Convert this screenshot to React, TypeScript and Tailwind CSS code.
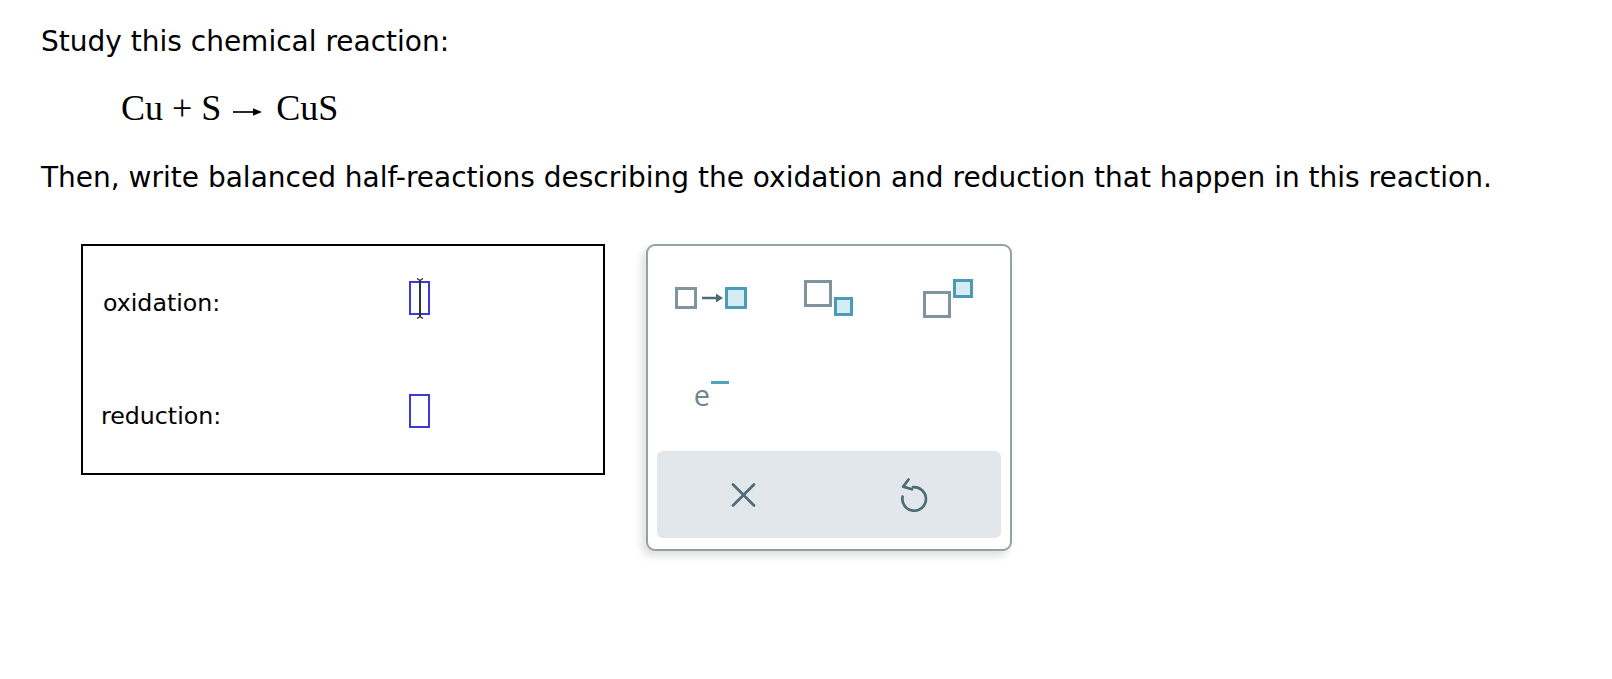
import React from "react";

function IconArrowBoxes() {
  return (
    <svg width="72" height="22" viewBox="0 0 72 22">
      <rect x="1.5" y="1.5" width="19" height="19" fill="#fff" stroke="#7f949c" strokeWidth="3" />
      <line x1="27" y1="11" x2="43" y2="11" stroke="#4f6b75" strokeWidth="2.5" />
      <polygon points="41,6.5 48,11 41,15.5" fill="#4f6b75" />
      <rect x="51.5" y="1.5" width="19" height="19" fill="#d6ecf4" stroke="#4a9bb6" strokeWidth="3" />
    </svg>
  );
}

function IconSubscript() {
  return (
    <svg width="49" height="36" viewBox="0 0 49 36">
      <rect x="1.5" y="1.5" width="25" height="24" fill="#fff" stroke="#7f949c" strokeWidth="3" />
      <rect x="31.5" y="18.5" width="16" height="16" fill="#d6ecf4" stroke="#4a9bb6" strokeWidth="3" />
    </svg>
  );
}

function IconSuperscript() {
  return (
    <svg width="50" height="39" viewBox="0 0 50 39">
      <rect x="1.5" y="13.5" width="25" height="24" fill="#fff" stroke="#7f949c" strokeWidth="3" />
      <rect x="31.5" y="1.5" width="17" height="16" fill="#d6ecf4" stroke="#4a9bb6" strokeWidth="3" />
    </svg>
  );
}

function IconX() {
  return (
    <svg width="25" height="24" viewBox="0 0 25 24">
      <path d="M2 1.5 L23 22.5 M23 1.5 L2 22.5" stroke="#4e6c76" strokeWidth="2.7" strokeLinecap="round" />
    </svg>
  );
}

function IconUndo() {
  return (
    <svg width="28" height="34" viewBox="0 0 28 34" fill="none">
      <path d="M12 9.2 A11.8 11.8 0 1 1 1.6 18.5" stroke="#4e6c76" strokeWidth="2.7" strokeLinecap="round" />
      <path d="M7.5 1.5 L2.2 8.6 L11 11.3" stroke="#4e6c76" strokeWidth="2.7" strokeLinecap="round" strokeLinejoin="round" />
    </svg>
  );
}

function ReactionArrow() {
  return (
    <svg width="29" height="40" viewBox="0 0 29 40">
      <line x1="0" y1="24" x2="22" y2="24" stroke="#000" strokeWidth="1.7" />
      <polygon points="20,20.3 29,24 20,27.7" fill="#000" />
    </svg>
  );
}

function Cursor() {
  return (
    <svg className="absolute left-[5px] top-[-5px]" width="8" height="41" viewBox="0 0 8 41">
      <line x1="4" y1="2" x2="4" y2="39" stroke="#333" strokeWidth="2" />
      <path d="M1 0.5 L4 2.5 L7 0.5 M1 40.5 L4 38.5 L7 40.5" stroke="#333" strokeWidth="1.4" fill="none" />
    </svg>
  );
}

export default function App() {
  return (
    <div className="min-h-[679px] w-full bg-white text-black pl-[41px] pt-[25px] font-['DejaVu_Sans',Verdana,sans-serif]">
      <div className="text-[28px] leading-[34px]">Study this chemical reaction:</div>

      <div className="mt-[29px] ml-[80px] h-[40px] flex items-center font-['Liberation_Serif',serif] text-[36px] leading-[40px]">
        <span>Cu</span>
        <span className="ml-[9px] mr-[9px]">+</span>
        <span>S</span>
        <span className="ml-[12px] mr-[14px] flex">
          <ReactionArrow />
        </span>
        <span>CuS</span>
      </div>

      <div className="mt-[33px] text-[28px] leading-[34px] whitespace-nowrap">
        Then, write balanced half-reactions describing the oxidation and reduction that happen in this reaction.
      </div>

      <div className="mt-[49px] ml-[40px] flex items-start gap-[41px]">
        <div className="w-[524px] h-[231px] border-2 border-black flex flex-col">
          <div className="h-[114px] flex items-center">
            <div className="w-[326px] pl-[20px] text-[23.7px] leading-[28px]">oxidation:</div>
            <div className="relative w-[21px] h-[34px] border-2 border-[#3a3ad6] mb-[10px]">
              <Cursor />
            </div>
          </div>
          <div className="h-[114px] flex items-center">
            <div className="w-[326px] pl-[18px] text-[23.7px] leading-[28px]">reduction:</div>
            <div className="w-[21px] h-[34px] border-2 border-[#3a3ad6] mb-[10px]" />
          </div>
        </div>

        <div className="w-[366px] h-[307px] rounded-[9px] border-2 border-[#91a2a9] bg-white px-[9px] pt-[7px] shadow-[-4px_5px_9px_rgba(0,0,0,0.13)]">
          <div className="grid grid-cols-3">
            <div className="h-[90px] flex items-center justify-center">
              <div className="mr-[6px] flex"><IconArrowBoxes /></div>
            </div>
            <div className="h-[90px] flex items-center justify-center">
              <div className="flex"><IconSubscript /></div>
            </div>
            <div className="h-[90px] flex items-center justify-center">
              <div className="ml-[8px] flex"><IconSuperscript /></div>
            </div>
            <div className="h-[104px] flex items-center justify-center">
              <div className="mr-[6px] flex items-start h-[28px]">
                <span className="font-['Open_Sans',sans-serif] text-[29px] leading-[28px] text-[#6f8790]">e</span>
                <span className="ml-[1px] w-[18px] h-[3px] bg-[#4fa1bd]" />
              </div>
            </div>
            <div className="h-[104px]" />
            <div className="h-[104px]" />
          </div>
          <div className="mt-[4px] h-[87px] rounded-[6px] bg-[#e1e7ea] grid grid-cols-2">
            <div className="flex items-center justify-center">
              <IconX />
            </div>
            <div className="flex items-center justify-center">
              <IconUndo />
            </div>
          </div>
        </div>
      </div>
    </div>
  );
}
